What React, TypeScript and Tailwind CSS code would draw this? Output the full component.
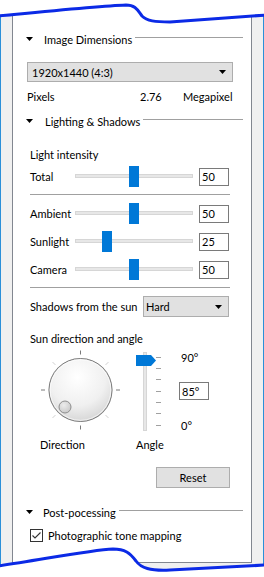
import React from "react";

const font = { fontFamily: "Lato, 'Liberation Sans', sans-serif" };

function Tri() {
  return (
    <svg width="7" height="4" viewBox="0 0 7 4" className="shrink-0">
      <path d="M0 0 L7 0 L3.5 4 Z" fill="#000" />
    </svg>
  );
}

function Header({ title, gap }: { title: string; gap: string }) {
  return (
    <div className="flex h-[16px] items-center">
      <Tri />
      <span className={`${gap} leading-none`}>{title}</span>
      <div className="ml-[3px] mb-[4px] h-px flex-1 bg-[#a0a0a0]" />
    </div>
  );
}

function Slider({ label, value }: { label: string; value: number }) {
  const left = Math.round(108 * (value / 100));
  return (
    <div className="flex h-[21px] items-center">
      <span className="w-[45px] leading-none">{label}</span>
      <div className="relative h-[21px] w-[118px]">
        <div className="absolute left-0 right-0 top-[8px] h-[4px] border border-[#d6d6d6] bg-[#e7e7e7]" />
        <div className="absolute top-0 h-[21px] w-[10px] bg-[#0078d7]" style={{ left }} />
      </div>
      <div className="ml-[6px] flex h-[18px] w-[30px] items-center border border-[#7a7a7a] bg-white pl-[2px] leading-none">
        {value}
      </div>
    </div>
  );
}

function Knob() {
  const ticks = [0, 45, 90, 135, 180, 225, 270, 315];
  return (
    <svg width="90" height="90" viewBox="0 0 90 90" className="shrink-0">
      <defs>
        <radialGradient id="kg" cx="45%" cy="30%" r="75%">
          <stop offset="0%" stopColor="#ffffff" />
          <stop offset="60%" stopColor="#f0f0f0" />
          <stop offset="100%" stopColor="#d2d2d2" />
        </radialGradient>
        <radialGradient id="ig" cx="40%" cy="35%" r="70%">
          <stop offset="0%" stopColor="#ececec" />
          <stop offset="100%" stopColor="#c8c8c8" />
        </radialGradient>
      </defs>
      {ticks.map((a) => {
        const r = (a * Math.PI) / 180;
        const cardinal = a % 90 === 0;
        const r1 = 35.5;
        const r2 = 39.5;
        return (
          <line
            key={a}
            x1={44.5 + r1 * Math.sin(r)}
            y1={45 - r1 * Math.cos(r)}
            x2={44.5 + r2 * Math.sin(r)}
            y2={45 - r2 * Math.cos(r)}
            stroke={cardinal ? "#7a7a7a" : "#d0d0d0"}
            strokeWidth="1"
          />
        );
      })}
      <circle cx="44.5" cy="45" r="32" fill="#c8c8c8" />
      <circle cx="44.5" cy="45" r="31.5" fill="url(#kg)" stroke="#7e7e7e" strokeWidth="1" />
      <circle cx="44.5" cy="45" r="30.3" fill="none" stroke="#ffffff" strokeWidth="0.8" opacity="0.8" />
      <circle cx="29" cy="62" r="6" fill="url(#ig)" stroke="#8e8e8e" strokeWidth="1" />
    </svg>
  );
}

function VSlider() {
  const ticks = [12, 23, 34, 46, 57, 68, 80];
  return (
    <svg width="30" height="90" viewBox="0 0 30 90" className="shrink-0">
      <rect x="9.5" y="7.5" width="3" height="78" fill="#e7e7e7" stroke="#d6d6d6" />
      {ticks.map((y) => (
        <line key={y} x1="22" y1={y + 0.5} x2="27" y2={y + 0.5} stroke="#a0a0a0" />
      ))}
      <path d="M2 10 L17 10 L22 15.5 L17 21 L2 21 Z" fill="#0078d7" />
    </svg>
  );
}

export default function App() {
  return (
    <div className="relative h-[577px] w-[264px] overflow-hidden whitespace-nowrap bg-white text-[11px] text-black" style={font}>
      <div className="flex h-full flex-col border-x border-[#2b90d9] bg-[#f0f0f0] px-[11px] pb-[14px]">
        <div className="flex flex-1 flex-col border border-[#828790] bg-white pl-[13px] pr-[8px]">
          <div className="mt-[30px]">
            <Header title="Image Dimensions" gap="ml-[11px]" />
          </div>
          <div className="ml-[1px] mr-[10px] mt-[15px] flex h-[20px] items-center justify-between border border-[#adadad] bg-[#e1e1e1] pl-[4px] pr-[6px]">
            <span className="leading-none">1920x1440 (4:3)</span>
            <Tri />
          </div>
          <div className="ml-[1px] mt-[6px] flex h-[16px] items-center leading-none">
            <span className="w-[113px]">Pixels</span>
            <span className="w-[43px]">2.76</span>
            <span>Megapixel</span>
          </div>
          <div className="mt-[9px]">
            <Header title="Lighting &amp; Shadows" gap="ml-[12px]" />
          </div>
          <div className="ml-[4px] flex w-[200px] flex-col">
            <div className="mt-[17px] flex h-[16px] items-center leading-none">Light intensity</div>
            <div className="mt-[4px]">
              <Slider label="Total" value={50} />
            </div>
            <div className="mt-[7px] h-px bg-[#a0a0a0]" />
            <div className="mt-[8px]">
              <Slider label="Ambient" value={50} />
            </div>
            <div className="mt-[7px]">
              <Slider label="Sunlight" value={25} />
            </div>
            <div className="mt-[7px]">
              <Slider label="Camera" value={50} />
            </div>
            <div className="mt-[7px] h-px bg-[#a0a0a0]" />
            <div className="mt-[8px] flex h-[21px] items-center">
              <span className="w-[113px] leading-none">Shadows from the sun</span>
              <div className="flex h-[21px] w-[86px] items-center justify-between border border-[#adadad] bg-[#e1e1e1] pl-[2px] pr-[6px]">
                <span className="leading-none">Hard</span>
                <Tri />
              </div>
            </div>
            <div className="mt-[15px] flex h-[13px] items-center leading-none">Sun direction and angle</div>
            <div className="flex h-[90px]">
              <div className="ml-[6px]">
                <Knob />
              </div>
              <div className="ml-[8px]">
                <VSlider />
              </div>
              <div className="ml-[15px] flex flex-col">
                <div className="mt-[5px] flex h-[14px] items-center pl-[2px] leading-none">90°</div>
                <div className="mt-[18px] flex h-[18px] w-[30px] items-center border border-[#7a7a7a] pl-[2px] leading-none">
                  85°
                </div>
                <div className="mt-[18px] flex h-[14px] items-center pl-[2px] leading-none">0°</div>
              </div>
            </div>
            <div className="mt-[2px] flex h-[14px] items-center leading-none">
              <span className="ml-[10px] w-[96px]">Direction</span>
              <span>Angle</span>
            </div>
            <div className="mt-[16px] flex justify-end">
              <div className="flex h-[21px] w-[74px] items-center justify-center border border-[#adadad] bg-[#e1e1e1] leading-none">
                Reset
              </div>
            </div>
          </div>
          <div className="mt-[16px]">
            <Header title="Post-pocessing" gap="ml-[10px]" />
          </div>
          <div className="ml-[4px] mt-[7px] flex h-[16px] items-center">
            <svg width="13" height="13" viewBox="0 0 13 13" className="shrink-0">
              <rect x="0.5" y="0.5" width="12" height="12" fill="#fff" stroke="#333" />
              <path d="M2.5 6.5 L5 9 L10.5 3.5" fill="none" stroke="#333" strokeWidth="1.1" />
            </svg>
            <span className="ml-[5px] leading-none">Photographic tone mapping</span>
          </div>
        </div>
      </div>
      <svg className="pointer-events-none absolute inset-0" width="264" height="577" viewBox="0 0 264 577">
        <path
          d="M-2 -2 L266 -2 L266 15 L170 22 C155 22 147 21 142 16 C138 11 136 5 126 5 C100 6 50 11 -2 16 Z"
          fill="#fff"
        />
        <path
          d="M-2 16 C50 11 100 6 126 5 C136 5 138 11 142 16 C147 21 155 22 170 22 L266 15"
          fill="none"
          stroke="#0b2ae6"
          strokeWidth="3"
        />
        <path
          d="M-2 566 C40 560 90 550 113 549 C125 549 130 553 136 561 C141 568 150 571 170 570 L266 565 L266 579 L-2 579 Z"
          fill="#fff"
        />
        <path
          d="M-2 566 C40 560 90 550 113 549 C125 549 130 553 136 561 C141 568 150 571 170 570 L266 565"
          fill="none"
          stroke="#0b2ae6"
          strokeWidth="3"
        />
      </svg>
    </div>
  );
}
